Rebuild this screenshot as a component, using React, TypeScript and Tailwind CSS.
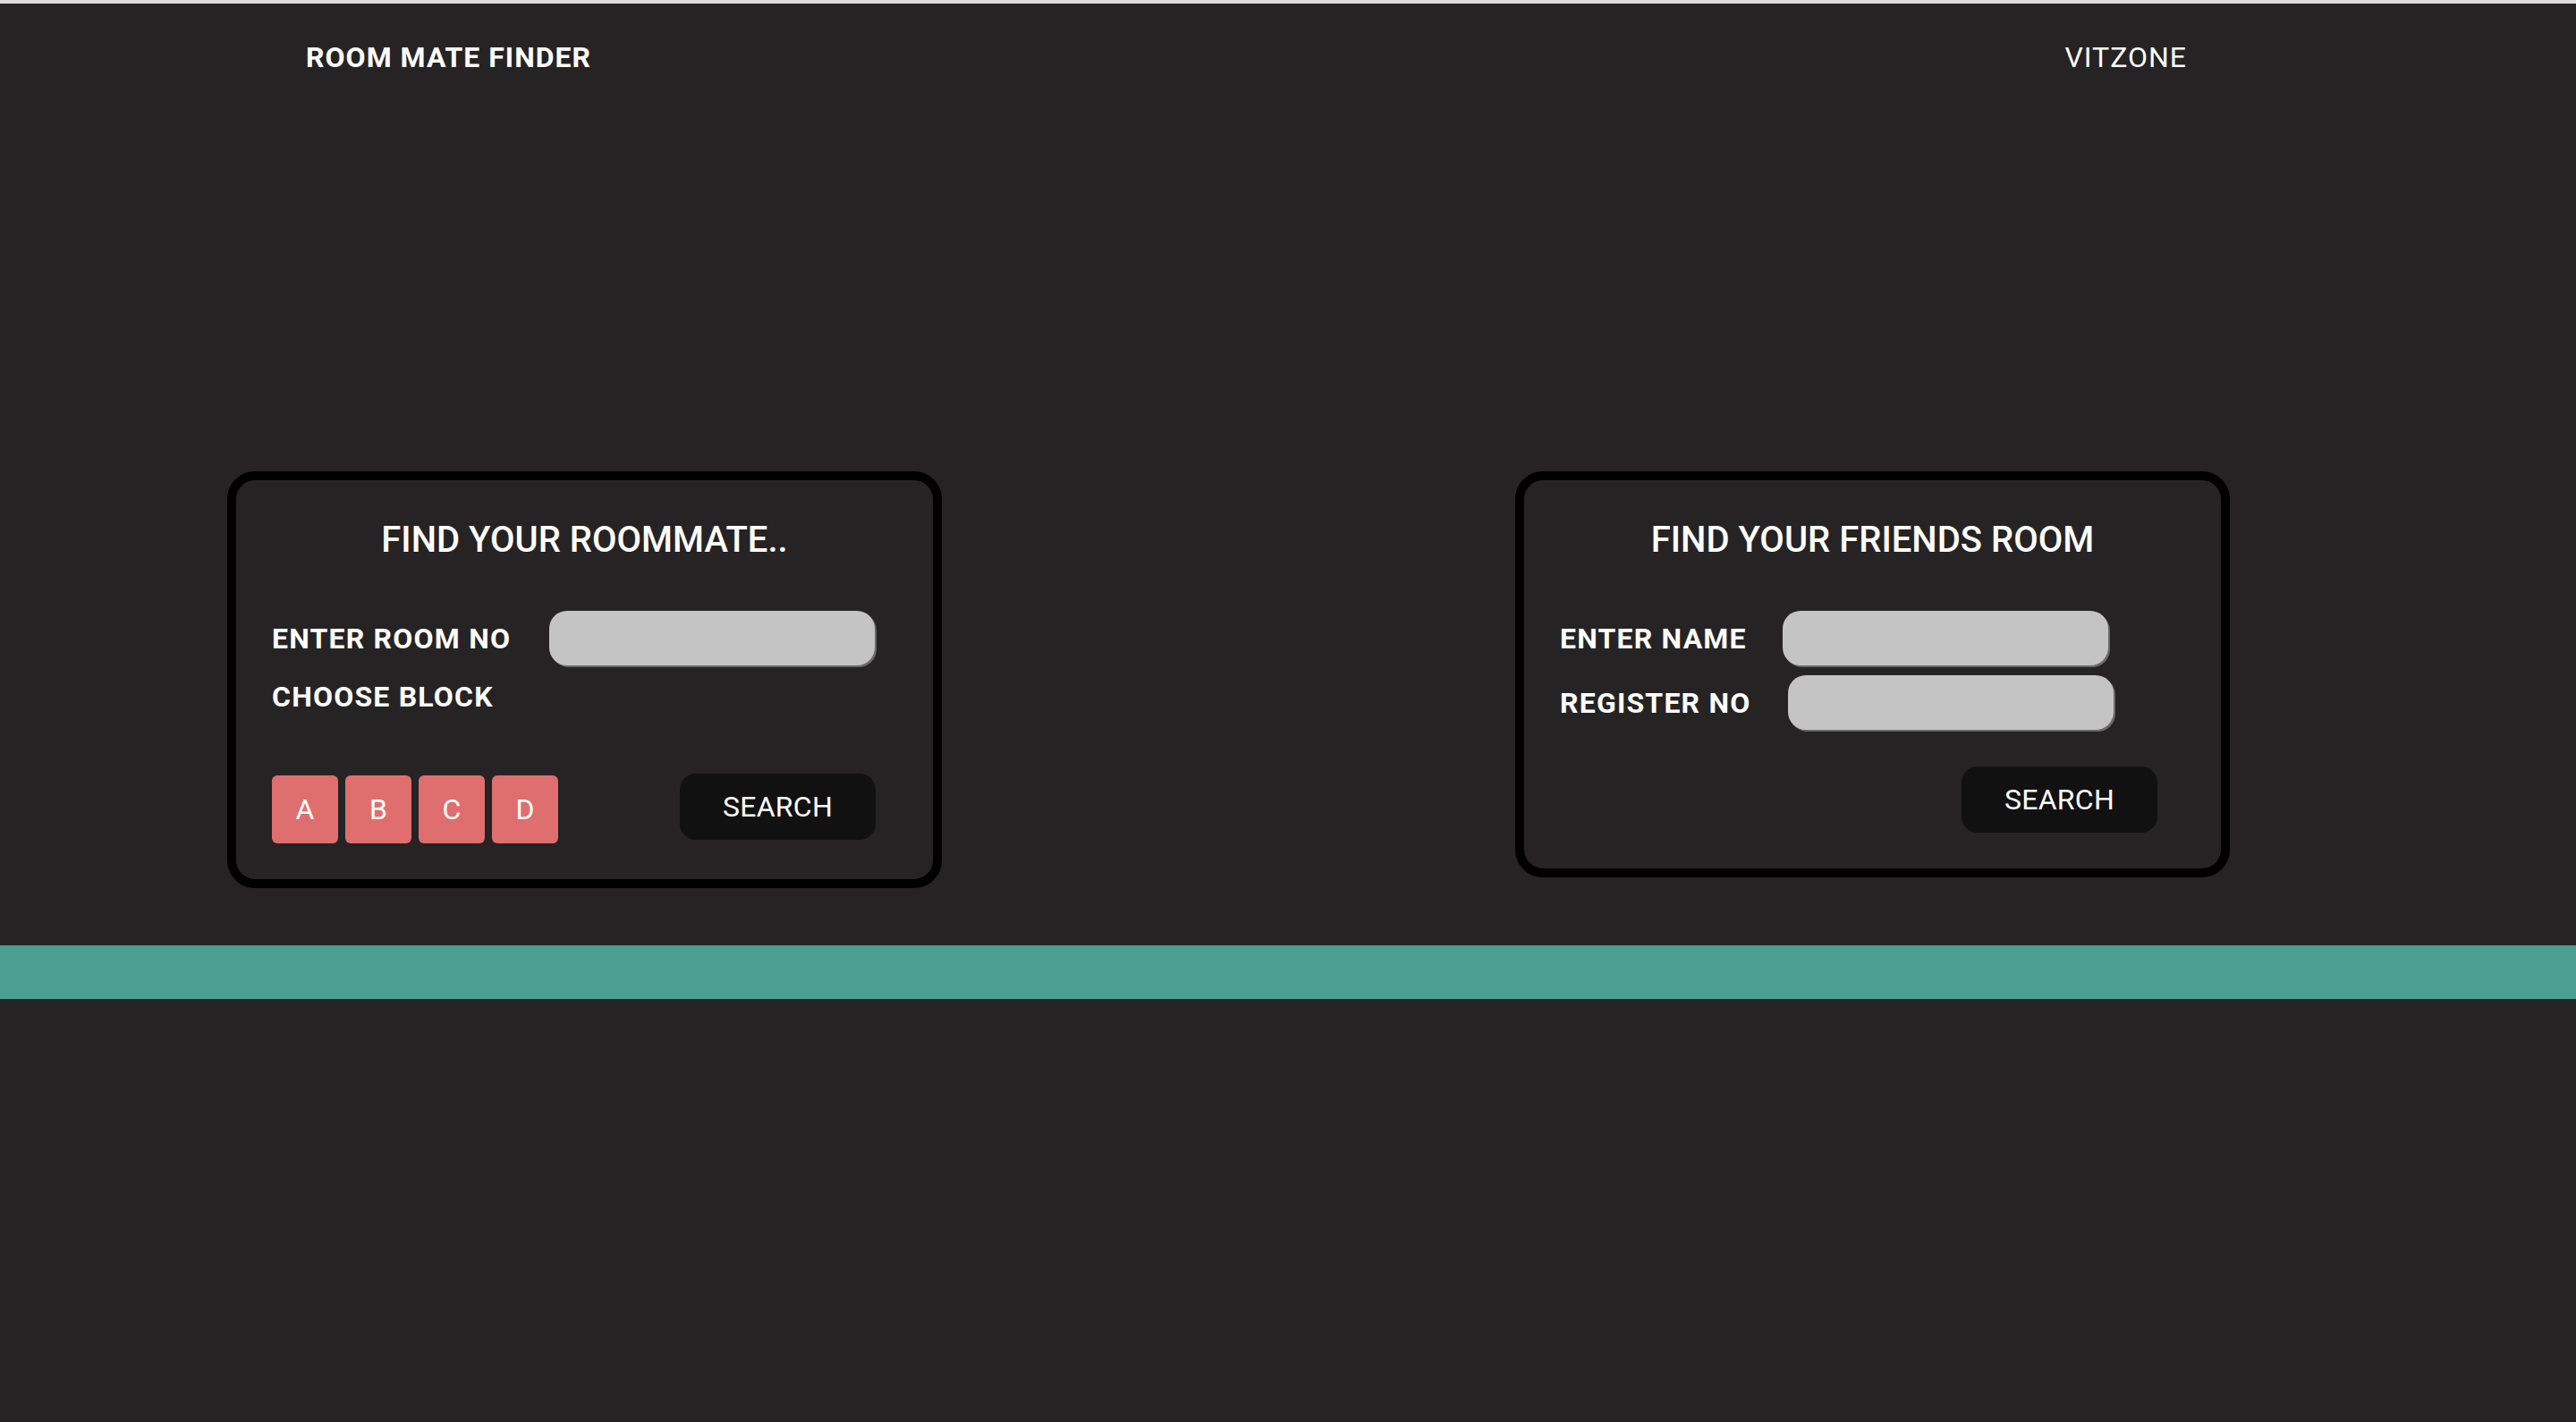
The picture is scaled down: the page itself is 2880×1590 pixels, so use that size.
import React from "react";

const font = { fontFamily: "Roboto, 'Liberation Sans', Arial, sans-serif" };

function Input() {
  return (
    <div className="w-[364px] h-[61px] shrink-0 rounded-[20px] bg-[#c4c4c4] shadow-[2px_2px_0_#6a6a6a]" />
  );
}

function SearchButton() {
  return (
    <button className="w-[219px] h-[74px] shrink-0 rounded-[18px] bg-[#111111] text-white text-[32px] leading-[38px] font-normal tracking-[0.3px]">
      SEARCH
    </button>
  );
}

export default function App() {
  return (
    <div className="min-h-[1590px] w-full bg-[#252324] text-white flex flex-col" style={font}>
      <div className="h-[4px] bg-[#dcdcdf]" />
      <header className="flex justify-between pt-[41px] pl-[342px] pr-[435px]">
        <div className="text-[32px] leading-[38px] font-bold tracking-[1px]">ROOM MATE FINDER</div>
        <div className="text-[32px] leading-[38px] font-normal tracking-[1px]">VITZONE</div>
      </header>

      <main className="mt-[444px] flex items-start pl-[254px] gap-[641px]">
        {/* Left card */}
        <section className="w-[799px] shrink-0 border-[10px] border-black rounded-[31px] bg-[#252324] pt-[43px] pb-[40px]">
          <h2 className="text-center text-[40px] leading-[48px] font-medium">FIND YOUR ROOMMATE..</h2>
          <div className="pl-[40px] pr-[64px]">
            <div className="mt-[55px] flex items-center">
              <span className="w-[310px] shrink-0 text-[32px] leading-[38px] font-bold tracking-[1.2px]">ENTER ROOM NO</span>
              <Input />
            </div>
            <div className="mt-[16px] text-[32px] leading-[38px] font-bold tracking-[1.2px]">CHOOSE BLOCK</div>
            <div className="mt-[67px] flex items-start justify-between">
              <div className="mt-[2px] flex gap-[8px]">
                {["A", "B", "C", "D"].map((l) => (
                  <button
                    key={l}
                    className="w-[74px] h-[76px] rounded-[6px] bg-[#df6e6e] text-white text-[32px] leading-[38px] font-normal flex items-center justify-center"
                  >
                    {l}
                  </button>
                ))}
              </div>
              <SearchButton />
            </div>
          </div>
        </section>

        {/* Right card */}
        <section className="w-[799px] shrink-0 border-[10px] border-black rounded-[31px] bg-[#252324] pt-[43px] pb-[40px]">
          <h2 className="text-center text-[40px] leading-[48px] font-medium">FIND YOUR FRIENDS ROOM</h2>
          <div className="pl-[40px]">
            <div className="mt-[55px] flex items-center">
              <span className="w-[249px] shrink-0 text-[32px] leading-[38px] font-bold tracking-[1.2px]">ENTER NAME</span>
              <Input />
            </div>
            <div className="mt-[11px] flex items-center">
              <span className="w-[255px] shrink-0 text-[32px] leading-[38px] font-bold tracking-[1.2px]">REGISTER NO</span>
              <Input />
            </div>
          </div>
          <div className="mt-[41px] flex justify-end pr-[71px]">
            <SearchButton />
          </div>
        </section>
      </main>

      <div className="mt-[64px] h-[60px] bg-[#4a9f92]" />
      <div className="flex-1" />
    </div>
  );
}
